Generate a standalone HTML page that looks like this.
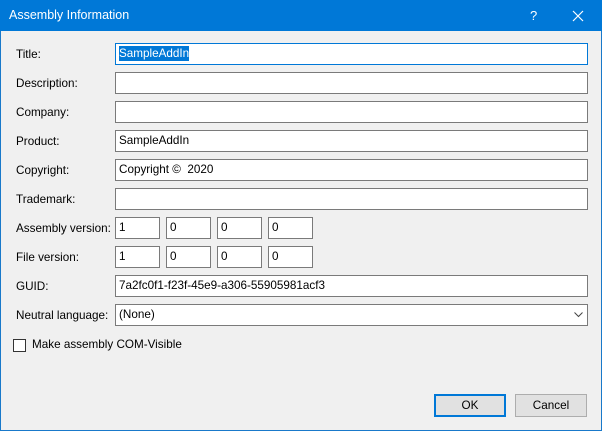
<!DOCTYPE html>
<html><head><style>
body{margin:0;width:602px;height:431px;overflow:hidden;font-family:"Liberation Sans",sans-serif;font-size:11.7px;color:#000}
.win{position:absolute;left:0;top:0;width:600px;height:430px;border:1px solid #1979ca;border-top:none;background:#f0f0f0}
.tb{position:absolute;left:0;top:0;width:602px;height:31px;background:#0078d7;color:#fff}
.tb .t{position:absolute;left:9px;top:8px;font-size:12.5px}
.lbl{position:absolute;left:16px}
.in{position:absolute;left:115px;width:471px;height:20px;border:1px solid #7a7a7a;background:#fff;box-sizing:content-box}
.in span{position:absolute;left:3px;top:3px}
.v{position:absolute;width:43px;height:20px;border:1px solid #7a7a7a;background:#fff}
.v span{position:absolute;left:3px;top:3px}
.btn{position:absolute;top:394px;height:21px;width:70px;border:1px solid #adadad;background:#e1e1e1;text-align:center;line-height:21px}
</style></head><body>
<div class="win"></div>
<div class="tb"><span class="t">Assembly Information</span>
<span style="position:absolute;left:530px;top:8px;font-size:13px">?</span>
<svg style="position:absolute;left:572px;top:10px" width="12" height="12"><path d="M1 1L11 11M11 1L1 11" stroke="#fff" stroke-width="1.2"/></svg></div>

<div class="lbl" style="top:48px">Title:</div>
<div class="in" style="top:43px;border-color:#0078d7"><span style="background:#0078d7;color:#fff;top:2px;padding:1px 0">SampleAddIn</span></div>
<div class="lbl" style="top:77px">Description:</div><div class="in" style="top:72px"></div>
<div class="lbl" style="top:106px">Company:</div><div class="in" style="top:101px"></div>
<div class="lbl" style="top:135px">Product:</div><div class="in" style="top:130px"><span>SampleAddIn</span></div>
<div class="lbl" style="top:164px">Copyright:</div><div class="in" style="top:159px"><span>Copyright ©&nbsp; 2020</span></div>
<div class="lbl" style="top:193px">Trademark:</div><div class="in" style="top:188px"></div>
<div class="lbl" style="top:222px">Assembly version:</div>
<div class="v" style="left:115px;top:217px"><span>1</span></div>
<div class="v" style="left:166px;top:217px"><span>0</span></div>
<div class="v" style="left:217px;top:217px"><span>0</span></div>
<div class="v" style="left:268px;top:217px"><span>0</span></div>
<div class="lbl" style="top:251px">File version:</div>
<div class="v" style="left:115px;top:246px"><span>1</span></div>
<div class="v" style="left:166px;top:246px"><span>0</span></div>
<div class="v" style="left:217px;top:246px"><span>0</span></div>
<div class="v" style="left:268px;top:246px"><span>0</span></div>
<div class="lbl" style="top:280px">GUID:</div><div class="in" style="top:275px"><span>7a2fc0f1-f23f-45e9-a306-55905981acf3</span></div>
<div class="lbl" style="top:309px">Neutral language:</div><div class="in" style="top:304px"><span>(None)</span>
<svg style="position:absolute;right:4px;top:7px" width="9" height="6"><path d="M0.5 0.5L4.5 4.5L8.5 0.5" stroke="#444" fill="none"/></svg></div>
<div style="position:absolute;left:13px;top:339px;width:11px;height:11px;border:1px solid #333;background:#fff"></div>
<div style="position:absolute;left:32px;top:338px">Make assembly COM-Visible</div>
<div class="btn" style="left:434px;border:2px solid #0078d7;height:19px;width:68px;line-height:19px">OK</div>
<div class="btn" style="left:515px">Cancel</div>
</body></html>
